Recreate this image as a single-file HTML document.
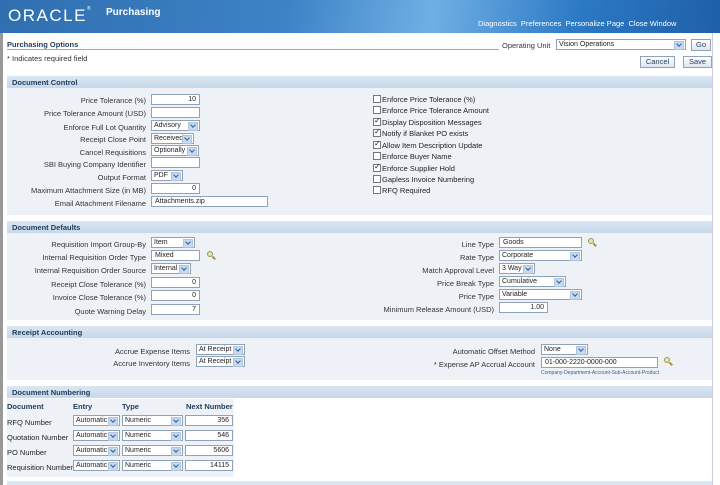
<!DOCTYPE html><html><head><style>
*{margin:0;padding:0;box-sizing:border-box}
body{width:720px;height:485px;position:relative;overflow:hidden;background:#fff;font-family:"Liberation Sans",sans-serif;font-size:7.5px;color:#222}
.a{position:absolute;white-space:nowrap}
.hdr{position:absolute;left:0;top:0;width:720px;height:33px;background:linear-gradient(100deg,#2f6fb0 0%,#3d83c6 40%,#6fb0e4 60%,#2c79c4 80%,#1f5fa8 100%)}
.sec{position:absolute;left:7px;width:705px;background:#eef2f7}
.sh{position:absolute;left:7px;width:705px;height:12px;background:linear-gradient(#dbe6f2,#c6d8ea);font-weight:bold;color:#1e3a5a;font-size:7.5px;padding:2px 0 0 5px}
.l{position:absolute;white-space:nowrap;text-align:right;color:#333;margin-top:2px}
.i{position:absolute;height:11px;background:#fff;border:1px solid #8fa3b8;font-size:7px;padding:0 3px;line-height:9px;white-space:nowrap;overflow:hidden}
.r{text-align:right}
.s{position:absolute;height:11px;background:#fff;border:1px solid #8fa3b8;font-size:7px;padding:0 2px;line-height:9px;white-space:nowrap}
.s:after{content:"";position:absolute;right:1px;top:1px;width:8px;height:7px;background:#c9d9ee;border:1px solid #b0c4dc}
.s:before{content:"";position:absolute;right:4px;top:2px;width:3px;height:3px;border-right:1.3px solid #2a5ea8;border-bottom:1.3px solid #2a5ea8;transform:rotate(45deg);z-index:2}
.c{position:absolute;width:8px;height:8px;border:1px solid #777;background:#fff}
.c.k:after{content:"✓";position:absolute;left:0;top:-3px;font-size:8px;color:#222}
.cl{position:absolute;white-space:nowrap;margin-top:1px}
.btn{position:absolute;height:12px;border:1px solid #8fa3b8;background:linear-gradient(#fff,#dde6ef);font-size:7.5px;color:#1e3a5a;text-align:center;line-height:10px}
.mg{position:absolute;width:6px;height:6px;border:1.5px solid #9a9a50;border-radius:50%;background:#dfe8b0}
.mg:after{content:"";position:absolute;left:4px;top:5px;width:4px;height:1.5px;background:#b09030;transform:rotate(45deg)}
</style></head><body>
<div class="hdr"></div>
<div class="a" style="left:8px;top:6px;font-size:17px;color:#fff;letter-spacing:1.5px">ORACLE<span style="font-size:5px;vertical-align:top">®</span></div>
<div class="a" style="left:106px;top:7px;font-size:10px;color:#fff;font-weight:bold">Purchasing</div>
<div class="a" style="left:478px;top:19px;font-size:7.5px;color:#fff">Diagnostics &nbsp;Preferences &nbsp;Personalize Page &nbsp;Close Window</div>
<div class="a" style="left:0;top:33px;width:3px;height:452px;background:#999"></div>
<div class="a" style="left:712px;top:33px;width:1px;height:452px;background:#ccd"></div>
<div class="a" style="left:7px;top:40px;font-size:7.5px;font-weight:bold;color:#1e3a5a">Purchasing Options</div>
<div class="a" style="left:7px;top:49px;width:492px;height:1px;background:#9ab"></div>
<div class="a" style="left:7px;top:54px;color:#333">* Indicates required field</div>
<div class="a" style="left:502px;top:41px;color:#333">Operating Unit</div>
<div class="s" style="left:556px;top:39px;width:130px">Vision Operations</div>
<div class="btn" style="left:691px;top:39px;width:20px">Go</div>
<div class="btn" style="left:640px;top:56px;width:35px">Cancel</div>
<div class="btn" style="left:683px;top:56px;width:29px">Save</div>

<div class="sec" style="top:76px;height:139px"></div>
<div class="sh" style="top:76px">Document Control</div>
<div class="l" style="right:574px;top:94px">Price Tolerance (%)</div><div class="i r" style="left:151px;top:94px;width:49px">10</div>
<div class="l" style="right:574px;top:107px">Price Tolerance Amount (USD)</div><div class="i" style="left:151px;top:107px;width:49px"></div>
<div class="l" style="right:574px;top:121px">Enforce Full Lot Quantity</div><div class="s" style="left:151px;top:120px;width:49px">Advisory</div>
<div class="l" style="right:574px;top:133px">Receipt Close Point</div><div class="s" style="left:151px;top:133px;width:43px">Received</div>
<div class="l" style="right:574px;top:146px">Cancel Requisitions</div><div class="s" style="left:151px;top:145px;width:48px">Optionally</div>
<div class="l" style="right:574px;top:158px">SBI Buying Company Identifier</div><div class="i" style="left:151px;top:157px;width:49px"></div>
<div class="l" style="right:574px;top:171px">Output Format</div><div class="s" style="left:151px;top:170px;width:32px">PDF</div>
<div class="l" style="right:574px;top:184px">Maximum Attachment Size (in MB)</div><div class="i r" style="left:151px;top:183px;width:49px">0</div>
<div class="l" style="right:574px;top:197px">Email Attachment Filename</div><div class="i" style="left:151px;top:196px;width:117px">Attachments.zip</div>
<div class="c" style="left:373px;top:95px"></div><div class="cl" style="left:382px;top:94px">Enforce Price Tolerance (%)</div>
<div class="c" style="left:373px;top:106px"></div><div class="cl" style="left:382px;top:105px">Enforce Price Tolerance Amount</div>
<div class="c k" style="left:373px;top:118px"></div><div class="cl" style="left:382px;top:117px">Display Disposition Messages</div>
<div class="c k" style="left:373px;top:129px"></div><div class="cl" style="left:382px;top:128px">Notify if Blanket PO exists</div>
<div class="c k" style="left:373px;top:141px"></div><div class="cl" style="left:382px;top:140px">Allow Item Description Update</div>
<div class="c" style="left:373px;top:152px"></div><div class="cl" style="left:382px;top:151px">Enforce Buyer Name</div>
<div class="c k" style="left:373px;top:164px"></div><div class="cl" style="left:382px;top:163px">Enforce Supplier Hold</div>
<div class="c" style="left:373px;top:175px"></div><div class="cl" style="left:382px;top:174px">Gapless Invoice Numbering</div>
<div class="c" style="left:373px;top:186px"></div><div class="cl" style="left:382px;top:185px">RFQ Required</div>

<div class="sec" style="top:221px;height:99px"></div>
<div class="sh" style="top:221px">Document Defaults</div>
<div class="l" style="right:574px;top:238px">Requisition Import Group-By</div><div class="s" style="left:151px;top:237px;width:44px">Item</div>
<div class="l" style="right:574px;top:251px">Internal Requisition Order Type</div><div class="i" style="left:151px;top:250px;width:49px">Mixed</div><div class="mg" style="left:207px;top:251px"></div>
<div class="l" style="right:574px;top:264px">Internal Requisition Order Source</div><div class="s" style="left:151px;top:263px;width:40px">Internal</div>
<div class="l" style="right:574px;top:278px">Receipt Close Tolerance (%)</div><div class="i r" style="left:151px;top:277px;width:49px">0</div>
<div class="l" style="right:574px;top:291px">Invoice Close Tolerance (%)</div><div class="i r" style="left:151px;top:290px;width:49px">0</div>
<div class="l" style="right:574px;top:305px">Quote Warning Delay</div><div class="i r" style="left:151px;top:304px;width:49px">7</div>
<div class="l" style="right:226px;top:238px">Line Type</div><div class="i" style="left:499px;top:237px;width:83px">Goods</div><div class="mg" style="left:588px;top:238px"></div>
<div class="l" style="right:226px;top:251px">Rate Type</div><div class="s" style="left:499px;top:250px;width:83px">Corporate</div>
<div class="l" style="right:226px;top:264px">Match Approval Level</div><div class="s" style="left:499px;top:263px;width:36px">3 Way</div>
<div class="l" style="right:226px;top:277px">Price Break Type</div><div class="s" style="left:499px;top:276px;width:67px">Cumulative</div>
<div class="l" style="right:226px;top:290px">Price Type</div><div class="s" style="left:499px;top:289px;width:83px">Variable</div>
<div class="l" style="right:226px;top:303px">Minimum Release Amount (USD)</div><div class="i r" style="left:499px;top:302px;width:49px">1.00</div>

<div class="sec" style="top:326px;height:54px"></div>
<div class="sh" style="top:326px">Receipt Accounting</div>
<div class="l" style="right:530px;top:345px">Accrue Expense Items</div><div class="s" style="left:196px;top:344px;width:49px">At Receipt</div>
<div class="l" style="right:530px;top:357px">Accrue Inventory Items</div><div class="s" style="left:196px;top:356px;width:49px">At Receipt</div>
<div class="l" style="right:185px;top:345px">Automatic Offset Method</div><div class="s" style="left:541px;top:344px;width:47px">None</div>
<div class="l" style="right:185px;top:358px">* Expense AP Accrual Account</div><div class="i" style="left:541px;top:357px;width:117px">01-000-2220-0000-000</div><div class="mg" style="left:664px;top:357px"></div>
<div class="a" style="left:541px;top:370px;font-size:5px;color:#3a5f8a">Company-Department-Account-Sub-Account-Product</div>

<div class="sec" style="top:386px;height:99px;background:#fff"></div>
<div class="sh" style="top:386px">Document Numbering</div>
<div class="a" style="left:7px;top:399px;width:227px;height:78px;background:#eef2f7"></div>
<div class="a" style="left:7px;top:402px;font-weight:bold;color:#1e3a5a">Document</div>
<div class="a" style="left:73px;top:402px;font-weight:bold;color:#1e3a5a">Entry</div>
<div class="a" style="left:122px;top:402px;font-weight:bold;color:#1e3a5a">Type</div>
<div class="a" style="left:186px;top:402px;font-weight:bold;color:#1e3a5a">Next Number</div>
<div class="a" style="left:7px;top:418px">RFQ Number</div><div class="s" style="left:73px;top:415px;width:47px">Automatic</div><div class="s" style="left:122px;top:415px;width:61px">Numeric</div><div class="i r" style="left:185px;top:415px;width:48px">356</div>
<div class="a" style="left:7px;top:433px">Quotation Number</div><div class="s" style="left:73px;top:430px;width:47px">Automatic</div><div class="s" style="left:122px;top:430px;width:61px">Numeric</div><div class="i r" style="left:185px;top:430px;width:48px">546</div>
<div class="a" style="left:7px;top:448px">PO Number</div><div class="s" style="left:73px;top:445px;width:47px">Automatic</div><div class="s" style="left:122px;top:445px;width:61px">Numeric</div><div class="i r" style="left:185px;top:445px;width:48px">5606</div>
<div class="a" style="left:7px;top:463px">Requisition Number</div><div class="s" style="left:73px;top:460px;width:47px">Automatic</div><div class="s" style="left:122px;top:460px;width:61px">Numeric</div><div class="i r" style="left:185px;top:460px;width:48px">14115</div>
<div class="a" style="left:7px;top:481px;width:705px;height:4px;background:#dbe6f2"></div>
</body></html>
